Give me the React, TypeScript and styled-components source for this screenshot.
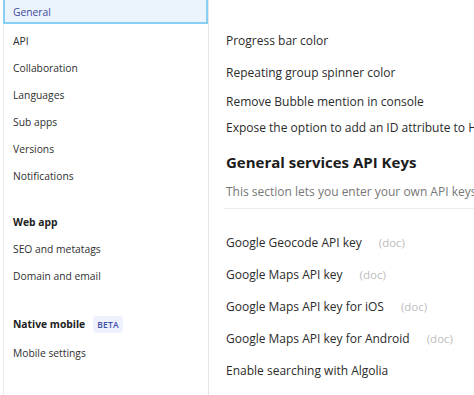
import React from 'react';
import styled, { createGlobalStyle } from 'styled-components';

const GlobalStyle = createGlobalStyle`
  html, body {
    margin: 0;
    padding: 0;
    background: #fff;
    overflow: hidden;
  }
  body {
    font-family: 'Open Sans', 'Noto Sans', sans-serif;
    color: #333;
  }
`;

const Page = styled.div`
  display: flex;
  width: 474px;
  height: 395px;
  overflow: hidden;
`;

const Sidebar = styled.nav`
  flex: 0 0 204px;
  margin-left: 3px;
  border-left: 1px solid #ececec;
  border-right: 1px solid #e6e6e6;
  display: flex;
  flex-direction: column;
`;

const NavItem = styled.div<{ active?: boolean }>`
  box-sizing: border-box;
  height: ${p => (p.active ? '28px' : '27px')};
  display: flex;
  align-items: center;
  padding-left: ${p => (p.active ? '8px' : '9px')};
  padding-top: ${p => (p.active ? '4px' : '0')};
  font-size: 10.3px;
  color: ${p => (p.active ? '#3d4a9a' : '#2f2f2f')};
  background: ${p => (p.active ? '#ebf3fd' : 'transparent')};
  border: ${p => (p.active ? '2px solid #86cff3' : 'none')};
  margin: ${p => (p.active ? '-4px 0 3px -1px' : '0')};
  white-space: nowrap;
`;

const GroupTitle = styled.div<{ gap: number }>`
  margin-top: ${p => p.gap}px;
  height: 26px;
  display: flex;
  align-items: center;
  gap: 8px;
  padding-left: 9px;
  font-size: 10.3px;
  font-weight: 700;
  color: #222;
`;

const Badge = styled.span`
  font-size: 8.5px;
  font-weight: 600;
  color: #3d4fa6;
  background: #eef2fc;
  padding: 3px 4px;
  border-radius: 3px;
  letter-spacing: 0.2px;
`;

const Main = styled.main`
  flex: 1;
  min-width: 0;
  padding: 25px 0 0 17px;
  white-space: nowrap;
`;

const Row = styled.div<{ h: number }>`
  height: ${p => p.h}px;
  display: flex;
  align-items: center;
  font-size: 12px;
  color: #2b2b2b;
`;

const Heading = styled.h2`
  margin: 10px 0 0;
  height: 22px;
  display: flex;
  align-items: center;
  font-size: 15px;
  font-weight: 700;
  color: #1c1c1c;
`;

const Intro = styled.p`
  margin: 10px 0 0;
  height: 17px;
  line-height: 17px;
  font-size: 12px;
  color: #777;
`;

const Divider = styled.hr`
  border: none;
  border-top: 1px solid #ececec;
  margin: 8px 0 17px -2px;
`;

const Doc = styled.span`
  margin-left: 17px;
  color: #bdbdbd;
  font-size: 11.5px;
`;

const generalNav = ['API', 'Collaboration', 'Languages', 'Sub apps', 'Versions', 'Notifications'];

const settings = [
  { label: 'Progress bar color', h: 30 },
  { label: 'Repeating group spinner color', h: 34 },
  { label: 'Remove Bubble mention in console', h: 24 },
  { label: 'Expose the option to add an ID attribute to HTML elements', h: 28 },
];

const apiKeys = [
  { label: 'Google Geocode API key', doc: true },
  { label: 'Google Maps API key', doc: true },
  { label: 'Google Maps API key for iOS', doc: true },
  { label: 'Google Maps API key for Android', doc: true },
  { label: 'Enable searching with Algolia', doc: false },
];

const App = (): JSX.Element => (
  <>
    <GlobalStyle />
    <Page>
      <Sidebar>
        <NavItem active>General</NavItem>
        {generalNav.map(item => (
          <NavItem key={item}>{item}</NavItem>
        ))}
        <GroupTitle gap={20}>Web app</GroupTitle>
        <NavItem>SEO and metatags</NavItem>
        <NavItem>Domain and email</NavItem>
        <GroupTitle gap={22}>
          Native mobile <Badge>BETA</Badge>
        </GroupTitle>
        <NavItem style={{ marginTop: 2 }}>Mobile settings</NavItem>
      </Sidebar>
      <Main>
        {settings.map(s => (
          <Row key={s.label} h={s.h}>
            {s.label}
          </Row>
        ))}
        <Heading>General services API Keys</Heading>
        <Intro>This section lets you enter your own API keys for the services used by your app.</Intro>
        <Divider />
        {apiKeys.map(k => (
          <Row key={k.label} h={32}>
            {k.label}
            {k.doc && <Doc>(doc)</Doc>}
          </Row>
        ))}
      </Main>
    </Page>
  </>
);

export default App;
